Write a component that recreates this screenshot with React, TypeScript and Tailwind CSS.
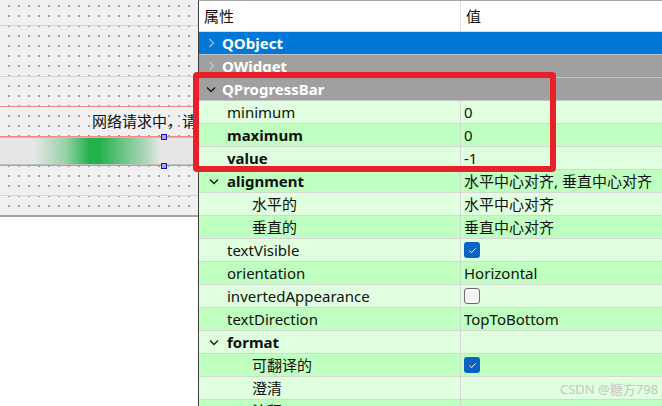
import type { ReactNode } from 'react';

const FONT = "font-['Noto_Sans','Noto_Sans_CJK_SC',sans-serif]";

function ChevronRight({ color }: { color: string }) {
  return (
    <svg width="7" height="10" viewBox="0 0 7 10" className="shrink-0">
      <polyline points="1.5,1 5.5,5 1.5,9" fill="none" stroke={color} strokeWidth="1.4" />
    </svg>
  );
}

function ChevronDown({ color = '#222' }: { color?: string }) {
  return (
    <svg width="10" height="7" viewBox="0 0 10 7" className="shrink-0">
      <polyline points="1,1.5 5,5.5 9,1.5" fill="none" stroke={color} strokeWidth="1.5" />
    </svg>
  );
}

function CheckBox({ checked }: { checked: boolean }) {
  if (!checked) {
    return <div className="w-4 h-4 rounded-[3px] border border-[#6b6b6b] bg-[#f4f4f4]" />;
  }
  return (
    <div className="w-4 h-4 rounded-[3px] bg-[#0a62c2] flex items-center justify-center">
      <svg width="9" height="7" viewBox="0 0 9 7">
        <polyline points="1.5,3.6 3.6,5.6 7.6,1.4" fill="none" stroke="#fff" strokeWidth="1" />
      </svg>
    </div>
  );
}

function GroupRow({ name, bg, chevron }: { name: string; bg: string; chevron: ReactNode }) {
  return (
    <div className={`h-[23px] shrink-0 flex items-center border-b border-[#c4c4c4] ${bg}`}>
      <div className="w-[23px] flex justify-center pl-[1px]">{chevron}</div>
      <span className="text-[15px] font-bold text-white leading-none">{name}</span>
    </div>
  );
}

function PropRow({
  name,
  value,
  dark,
  bold,
  sub,
  open,
}: {
  name: string;
  value?: ReactNode;
  dark: boolean;
  bold?: boolean;
  sub?: boolean;
  open?: boolean;
}) {
  return (
    <div className={`h-[23px] shrink-0 flex border-b border-[#d6d6d6] ${dark ? 'bg-[#bfffbf]' : 'bg-[#dfffdf]'}`}>
      <div className="w-[262px] flex items-center border-r border-[#d6d6d6]">
        <div className="w-[28px] flex justify-center pl-[2px]">{open && <ChevronDown />}</div>
        <span
          className={`text-[15px] leading-none text-[#111] whitespace-nowrap ${bold ? 'font-bold' : ''} ${sub ? 'pl-[25px]' : ''}`}
        >
          {name}
        </span>
      </div>
      <div className="flex-1 flex items-center pl-[3px] text-[15px] leading-none text-[#111] whitespace-nowrap overflow-hidden">
        {value}
      </div>
    </div>
  );
}

function Canvas() {
  return (
    <div className="w-[198px] shrink-0 flex flex-col bg-white">
      <div className="h-[217px] shrink-0 flex flex-col bg-[#f0f0f0] bg-[radial-gradient(circle,#9c9c9c_0.7px,transparent_0.9px)] bg-[length:10px_10px] bg-[position:4px_1px] border-b-2 border-[#a3a3a3]">
        <div className="h-[26px] shrink-0 border-b border-[#d4d4d4]" />
        <div className="h-[51px] shrink-0 border-b border-[#d4d4d4]" />
        <div className="h-[30px] shrink-0 border-b border-[#f28a8a]" />
        {/* label */}
        <div className="h-[30px] shrink-0 border-b border-[#f28a8a] flex items-center pl-[92px]">
          <span className="text-[15px] leading-none text-[#111] whitespace-nowrap">网络请求中，请</span>
        </div>
        {/* progress bar */}
        <div className="relative h-[29px] shrink-0 border-b border-[#f28a8a]">
          <div className="h-full border-y border-[#bdbdbd] bg-[#e6e6e6] flex">
            <div className="ml-[34px] w-[126px] h-full bg-[linear-gradient(90deg,rgba(34,178,76,0)_0%,rgba(34,178,76,0.4)_25%,#22b24c_44%,#22b24c_52%,rgba(34,178,76,0.6)_72%,rgba(34,178,76,0.3)_88%,rgba(34,178,76,0)_100%)]" />
          </div>
          <div className="absolute left-[161px] top-[-3px] w-[6px] h-[6px] border border-[#1010e0] bg-[#a9a9c9]" />
          <div className="absolute left-[161px] bottom-[-4px] w-[6px] h-[6px] border border-[#1010e0] bg-[#a9a9c9]" />
        </div>
        <div className="h-[30px] shrink-0 border-b border-[#d4d4d4]" />
        <div className="flex-1" />
      </div>
      <div className="flex-1" />
    </div>
  );
}

export default function App() {
  return (
    <div className={`relative w-[662px] h-[406px] overflow-hidden flex bg-white ${FONT}`}>
      <Canvas />
      <div className="flex-1 flex flex-col border-l border-[#3c3c3c] border-t border-t-[#a8a8a8] bg-white">
        <div className="h-[31px] flex border-b border-[#dcdcdc] shrink-0">
          <div className="w-[262px] flex items-center pl-[5px] border-r border-[#e2e2e2] text-[15px] text-[#111] leading-none">属性</div>
          <div className="flex-1 flex items-center pl-[5px] text-[15px] text-[#111] leading-none">值</div>
        </div>
        <GroupRow name="QObject" bg="bg-[#0078d7]" chevron={<ChevronRight color="#9fb6cc" />} />
        <GroupRow name="QWidget" bg="bg-[#a0a0a0]" chevron={<ChevronRight color="#c4c4c4" />} />
        <GroupRow name="QProgressBar" bg="bg-[#a0a0a0]" chevron={<ChevronDown color="#1e1e1e" />} />
        <PropRow name="minimum" value="0" dark={false} />
        <PropRow name="maximum" value="0" dark bold />
        <PropRow name="value" value="-1" dark={false} bold />
        <PropRow name="alignment" value="水平中心对齐, 垂直中心对齐" dark bold open />
        <PropRow name="水平的" value="水平中心对齐" dark={false} sub />
        <PropRow name="垂直的" value="垂直中心对齐" dark sub />
        <PropRow name="textVisible" value={<CheckBox checked />} dark={false} />
        <PropRow name="orientation" value="Horizontal" dark />
        <PropRow name="invertedAppearance" value={<CheckBox checked={false} />} dark={false} />
        <PropRow name="textDirection" value="TopToBottom" dark />
        <PropRow name="format" dark={false} bold open />
        <PropRow name="可翻译的" value={<CheckBox checked />} dark sub />
        <PropRow name="澄清" dark={false} sub />
        <PropRow name="注释" dark sub />
      </div>
      {/* annotation box */}
      <div className="absolute left-[193px] top-[72px] w-[363px] h-[100px] border-[6px] border-[#e8202a] rounded-[4px]" />
      <div className="absolute left-[560px] top-[383px] text-[13px] leading-none text-[#c6c6c6] whitespace-nowrap">
        CSDN @糖方798
      </div>
    </div>
  );
}
